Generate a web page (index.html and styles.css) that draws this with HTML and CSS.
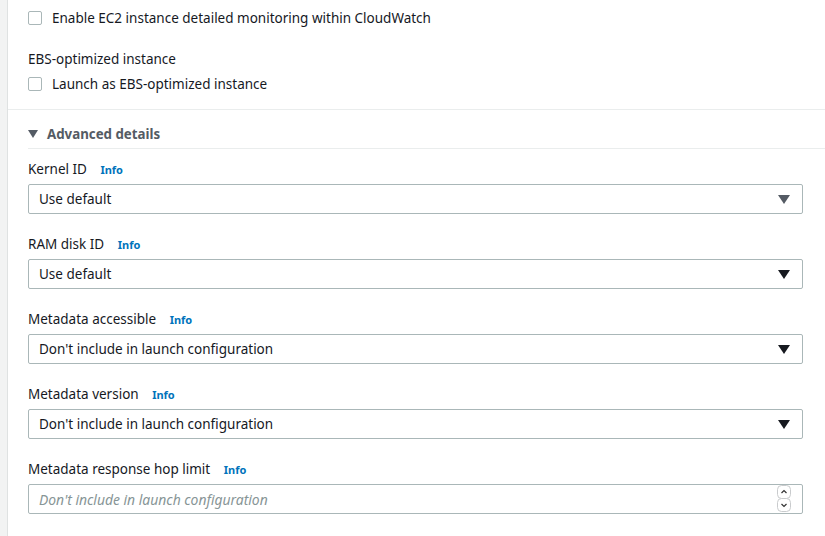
FILE: index.html
```html
<!DOCTYPE html>
<html lang="en">
<head>
    <meta charset="UTF-8">
    <title>Launch configuration - Advanced details</title>
    <link rel="stylesheet" href="styles.css">
</head>
<body>
    <div class="page">
        <div class="side"></div>
        <div class="panel">
            <div class="section">
                <label class="check">
                    <span class="box"></span>
                    Enable EC2 instance detailed monitoring within CloudWatch
                </label>

                <div class="field-title">EBS-optimized instance</div>
                <label class="check">
                    <span class="box"></span>
                    Launch as EBS-optimized instance
                </label>
            </div>

            <div class="advanced">
                <div class="adv-header">
                    <span class="caret"></span>
                    Advanced details
                </div>

                <div class="form-group">
                    <div class="label">Kernel ID <a class="info">Info</a></div>
                    <div class="select">
                        <span>Use default</span>
                        <span class="arrow muted"></span>
                    </div>
                </div>

                <div class="form-group">
                    <div class="label">RAM disk ID <a class="info">Info</a></div>
                    <div class="select">
                        <span>Use default</span>
                        <span class="arrow"></span>
                    </div>
                </div>

                <div class="form-group">
                    <div class="label">Metadata accessible <a class="info">Info</a></div>
                    <div class="select">
                        <span>Don't include in launch configuration</span>
                        <span class="arrow"></span>
                    </div>
                </div>

                <div class="form-group">
                    <div class="label">Metadata version <a class="info">Info</a></div>
                    <div class="select">
                        <span>Don't include in launch configuration</span>
                        <span class="arrow"></span>
                    </div>
                </div>

                <div class="form-group">
                    <div class="label">Metadata response hop limit <a class="info">Info</a></div>
                    <div class="select number">
                        <span class="placeholder">Don't include in launch configuration</span>
                        <span class="spinner">
                            <svg width="14" height="28" viewBox="0 0 14 28">
                                <rect x="0.5" y="0.5" width="13" height="13" rx="4" fill="#fff" stroke="#c9cbcd"/>
                                <rect x="0.5" y="13.5" width="13" height="13" rx="4" fill="#fff" stroke="#c9cbcd"/>
                                <path d="M4.5 8 L7 5.5 L9.5 8" fill="none" stroke="#333" stroke-width="1.2"/>
                                <path d="M4.5 19 L7 21.5 L9.5 19" fill="none" stroke="#333" stroke-width="1.2"/>
                            </svg>
                        </span>
                    </div>
                </div>
            </div>
        </div>
    </div>
</body>
</html>
```

FILE: styles.css
```css
* {
    margin: 0;
    padding: 0;
    box-sizing: border-box;
}

body {
    font-family: "Noto Sans", "Open Sans", sans-serif;
    font-size: 13.5px;
    color: #16191f;
    background: #fff;
}

.page {
    display: flex;
    min-height: 536px;
}

.side {
    width: 8px;
    flex-shrink: 0;
    background: #f2f3f3;
    border-right: 1px solid #dfe2e2;
}

.panel {
    flex: 1;
}

.section {
    padding: 8px 0 15px 20px;
    border-bottom: 1px solid #eaeded;
}

.check {
    display: flex;
    align-items: center;
    gap: 10px;
    height: 20px;
}

.box {
    width: 14px;
    height: 14px;
    border: 1px solid #aab7b8;
    border-radius: 2px;
    background: #fff;
}

.field-title {
    margin-top: 21px;
    line-height: 20px;
    margin-bottom: 5px;
}

.advanced {
    padding-left: 20px;
}

.adv-header {
    display: flex;
    align-items: center;
    gap: 9px;
    height: 39px;
    padding-top: 9px;
    font-size: 13.3px;
    font-weight: 700;
    color: #545b64;
    border-bottom: 1px solid #eaeded;
}

.caret {
    width: 0;
    height: 0;
    border-left: 5px solid transparent;
    border-right: 5px solid transparent;
    border-top: 8px solid #545b64;
}

.form-group {
    padding-top: 11px;
    height: 75px;
    width: 775px;
}

.label {
    line-height: 18px;
    margin-bottom: 5px;
}

.info {
    color: #0073bb;
    font-size: 11px;
    font-weight: 700;
    margin-left: 10px;
}

.select {
    display: flex;
    align-items: center;
    justify-content: space-between;
    height: 30px;
    padding: 0 12px 0 10px;
    border: 1px solid #aab7b8;
    border-radius: 2px;
}

.arrow {
    width: 0;
    height: 0;
    border-left: 6px solid transparent;
    border-right: 6px solid transparent;
    border-top: 9px solid #16191f;
}

.arrow.muted {
    border-top-color: #545b64;
}

.number {
    padding-right: 11px;
}

.placeholder {
    color: #879596;
    font-size: 13.9px;
    font-style: italic;
}

.spinner {
    display: flex;
}
```
